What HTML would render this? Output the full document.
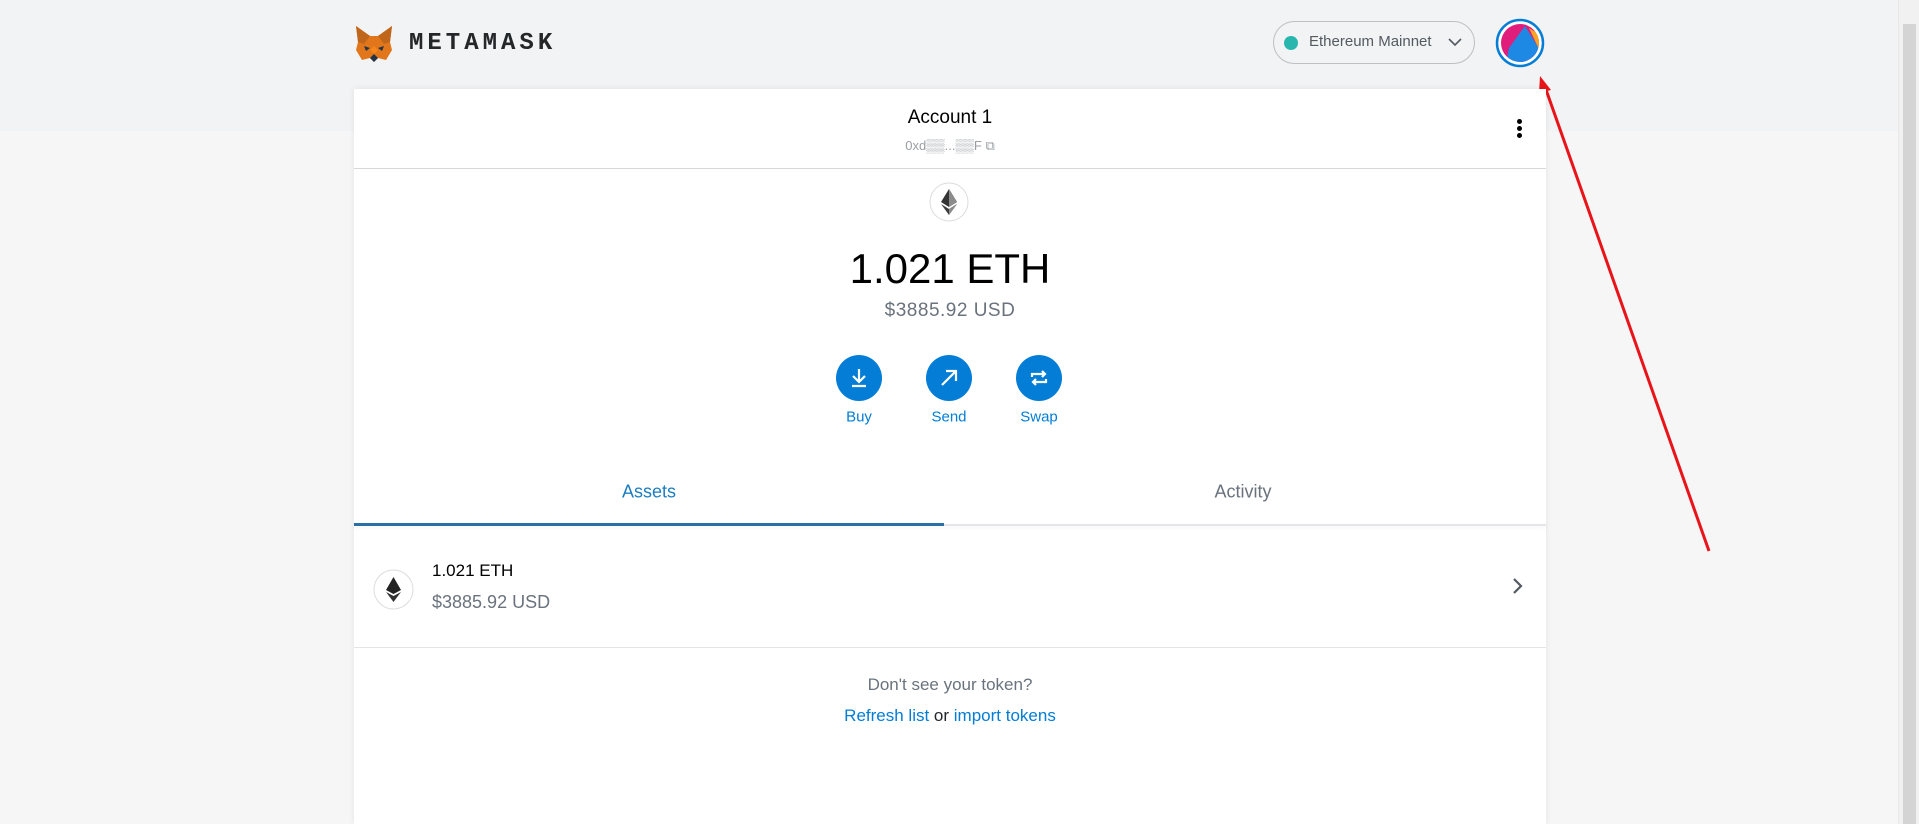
<!DOCTYPE html>
<html><head><meta charset="utf-8"><style>
*{margin:0;padding:0;box-sizing:border-box}
body{width:1919px;height:824px;overflow:hidden;background:#f6f6f6;font-family:"Liberation Sans",sans-serif;position:relative}
.top{position:absolute;left:0;top:0;width:1898px;height:131px;background:#f2f3f4}
.sb{position:absolute;right:0;top:0;width:21px;height:824px;background:#f1f1f1;border-left:1px solid #e8e8e8}
.sb .th{position:absolute;left:4px;top:24px;width:13px;height:800px;background:#d4d4d4}
.abs{position:absolute}
.card{position:absolute;left:354px;top:89px;width:1192px;height:735px;background:#fff;box-shadow:0 0 6px rgba(0,0,0,.08)}
.c{position:absolute;transform:translate(-50%,-50%);white-space:nowrap}
.btn{position:absolute;width:46px;height:46px;border-radius:50%;background:#037dd6;transform:translate(-50%,-50%)}
.btn svg{position:absolute;left:11px;top:11px}
</style></head><body>
<div class="top"></div>
<div class="sb"><div class="th"></div></div>
<svg class="abs" style="left:354px;top:24px" width="40" height="40" viewBox="0 0 40 40">
<polygon points="2,2 16,12 24,12 38,2 36,18 38,26 32,36 24,34 20,38 16,34 8,36 2,26 4,18" fill="#e2761b"/>
<polygon points="2,2 16,12 10,20 4,18" fill="#c0661a"/><polygon points="38,2 24,12 30,20 36,18" fill="#c0661a"/>
<polygon points="16,34 20,38 24,34 20,30" fill="#233447"/><polygon points="10,22 16,24 12,27" fill="#233447"/><polygon points="30,22 24,24 28,27" fill="#233447"/>
<polygon points="16,26 20,30 24,26 20,22" fill="#f6851b"/></svg>
<div class="abs" style="left:409px;top:30px;font-size:24px;letter-spacing:4px;color:#24272a;font-weight:bold;font-family:'Liberation Mono',monospace">METAMASK</div>
<div class="abs" style="left:1273px;top:21px;width:202px;height:43px;border:1px solid #bbc0c5;border-radius:22px;background:#f2f3f4"></div>
<div class="abs" style="left:1284px;top:36px;width:14px;height:14px;border-radius:50%;background:#29b6af"></div>
<div class="abs" style="left:1309px;top:33px;font-size:15px;color:#535a61">Ethereum Mainnet</div>
<svg class="abs" style="left:1448px;top:37px" width="14" height="10"><path d="M1 2 L7 8 L13 2" stroke="#535a61" stroke-width="1.6" fill="none"/></svg>
<svg class="abs" style="left:1495px;top:18px" width="50" height="50" viewBox="0 0 50 50">
<circle cx="25" cy="25" r="23" fill="#fff" stroke="#037dd6" stroke-width="2.5"/>
<clipPath id="a"><circle cx="25" cy="25" r="19"/></clipPath>
<g clip-path="url(#a)"><rect x="0" y="0" width="50" height="50" fill="#e01d7a"/><polygon points="30,8 50,40 50,50 10,50 14,30" fill="#1e88e5"/><polygon points="34,10 50,20 50,44" fill="#f5a623"/></g></svg>
<svg class="abs" style="left:1540px;top:76px;overflow:visible" width="180" height="480"><path d="M169 475 L4 8" stroke="#e8141a" stroke-width="3"/><polygon points="0,0 11,14 -1,17" fill="#e8141a"/></svg>
<div class="card">
<div class="c" style="left:596px;top:29px;font-size:19px;color:#000">Account 1</div>
<div class="c" style="left:596px;top:57px;font-size:13px;color:#9a9ea3">0xd▒▒...▒▒F ⧉</div>
<div class="abs" style="left:1163px;top:30px;width:5px"><div style="width:5px;height:5px;border-radius:50%;background:#000;margin-bottom:2px"></div><div style="width:5px;height:5px;border-radius:50%;background:#000;margin-bottom:2px"></div><div style="width:5px;height:5px;border-radius:50%;background:#000"></div></div>
<div class="abs" style="left:0;top:79px;width:1192px;height:1px;background:#d6d9dc"></div>
<svg class="abs" style="left:575px;top:93px" width="40" height="40"><circle cx="20" cy="20" r="19" fill="#fff" stroke="#dadcdf"/><polygon points="20,7 12,20 20,25 28,20" fill="#343434"/><polygon points="20,7 20,25 28,20" fill="#8c8c8c"/><polygon points="12,22 20,33 28,22 20,27" fill="#3c3c3b"/><polygon points="20,27 20,33 28,22" fill="#8c8c8c"/></svg>
<div class="c" style="left:596px;top:180px;font-size:42px;color:#000">1.021 ETH</div>
<div class="c" style="left:596px;top:222px;font-size:19px;color:#6a737d;letter-spacing:.5px">$3885.92 USD</div>
<div class="btn" style="left:505px;top:289px"><svg width="24" height="24"><path d="M12 3 V15 M6 10 L12 16 L18 10 M5 20 H19" stroke="#fff" stroke-width="2.2" fill="none"/></svg></div>
<div class="btn" style="left:595px;top:289px"><svg width="24" height="24"><path d="M5 19 L18 6 M9 5 H19 V15" stroke="#fff" stroke-width="2.2" fill="none"/></svg></div>
<div class="btn" style="left:685px;top:289px"><svg width="24" height="24"><path d="M5 11 V8 H18 M15 5 L18 8 L15 11 M19 13 V16 H6 M9 13 L6 16 L9 19" stroke="#fff" stroke-width="2.2" fill="none"/></svg></div>
<div class="c" style="left:505px;top:328px;font-size:15px;color:#037dd6">Buy</div>
<div class="c" style="left:595px;top:328px;font-size:15px;color:#037dd6">Send</div>
<div class="c" style="left:685px;top:328px;font-size:15px;color:#037dd6">Swap</div>
<div class="c" style="left:295px;top:403px;font-size:18px;color:#1f7ec0">Assets</div>
<div class="c" style="left:889px;top:403px;font-size:18px;color:#6a737d">Activity</div>
<div class="abs" style="left:0;top:435px;width:1192px;height:2px;background:#e3e5e8;box-shadow:0 2px 4px rgba(0,0,0,.06)"></div>
<div class="abs" style="left:0;top:434px;width:590px;height:3px;background:#2a70a8"></div>
<svg class="abs" style="left:19px;top:480px" width="41" height="41"><circle cx="20.5" cy="20.5" r="19.5" fill="#fff" stroke="#dadcdf"/><polygon points="20.5,8 13,21 20.5,25 28,21" fill="#222"/><polygon points="13,23 20.5,33 28,23 20.5,27" fill="#333"/></svg>
<div class="abs" style="left:78px;top:472px;font-size:17px;color:#000">1.021 ETH</div>
<div class="abs" style="left:78px;top:503px;font-size:18px;color:#6a737d">$3885.92 USD</div>
<svg class="abs" style="left:1158px;top:488px" width="12" height="18"><path d="M2 2 L9 9 L2 16" stroke="#535a61" stroke-width="2.2" fill="none"/></svg>
<div class="abs" style="left:0;top:558px;width:1192px;height:1px;background:#e3e5e8"></div>
<div class="c" style="left:596px;top:596px;font-size:17px;color:#6a737d">Don't see your token?</div>
<div class="c" style="left:596px;top:627px;font-size:17px;color:#24272a"><span style="color:#037dd6">Refresh list</span> or <span style="color:#037dd6">import tokens</span></div>
</div>
</body></html>
